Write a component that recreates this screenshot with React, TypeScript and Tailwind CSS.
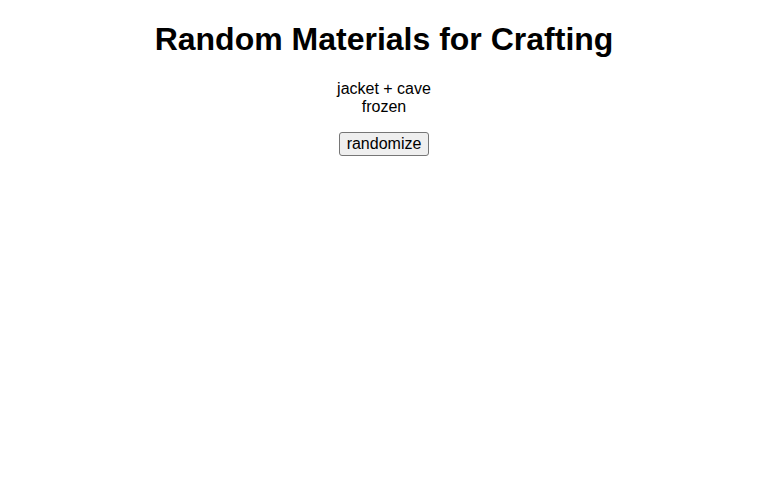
import { useState } from "react";

const items = ["jacket", "cave", "rope", "lantern", "boots", "river", "shield", "forest"];
const traits = ["frozen", "burning", "ancient", "rusty", "glowing", "hollow"];

const pick = (list: string[]) => list[Math.floor(Math.random() * list.length)];

export default function App() {
  const [combo, setCombo] = useState({ a: "jacket", b: "cave", trait: "frozen" });

  const randomize = () => {
    setCombo({ a: pick(items), b: pick(items), trait: pick(traits) });
  };

  return (
    <div className="min-h-screen bg-white text-black text-center font-['Liberation_Sans',Arial,sans-serif]">
      <h1 className="pt-[21px] text-[32px] leading-[37px] font-bold">
        Random Materials for Crafting
      </h1>

      <div className="mt-[22px] text-base leading-[18px]">
        <div>
          {combo.a} + {combo.b}
        </div>
        <div>{combo.trait}</div>
      </div>

      <div className="mt-4">
        <button
          onClick={randomize}
          className="px-[7px] py-[2px] text-base leading-[18px] bg-[#efefef] border border-[#767676] rounded-[3px] hover:bg-[#e5e5e5]"
        >
          randomize
        </button>
      </div>
    </div>
  );
}
